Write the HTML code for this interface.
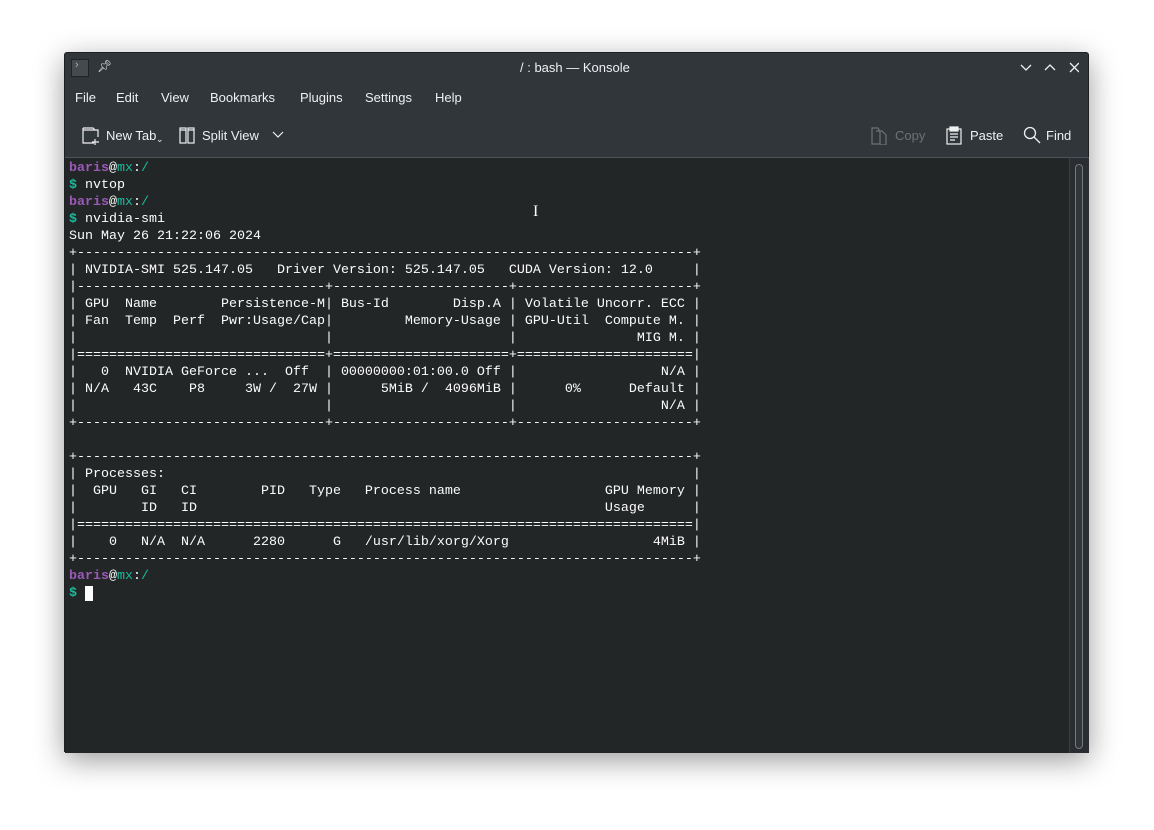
<!DOCTYPE html>
<html><head><meta charset="utf-8"><style>
body{margin:0;width:1154px;height:830px;background:#fff;position:relative;overflow:hidden;font-family:"Liberation Sans",sans-serif}
#win{position:absolute;left:64px;top:52px;width:1025px;height:700px;background:#31363b;box-shadow:0 8px 30px rgba(0,0,0,.4);border:1px solid #1e2124;box-sizing:border-box;border-radius:3px 3px 0 0}
.t{position:absolute;color:#eff0f1;font-size:13px;white-space:nowrap}
#term{position:absolute;left:0;top:104px;width:1004px;height:595px;background:#232627;border-top:1px solid #4d5358}
#sb{position:absolute;left:1004px;top:104px;width:19px;height:595px;background:#2a2e32;border-left:1px solid #3b4045;border-top:1px solid #4d5358}
#thumb{position:absolute;left:5px;top:6px;width:8px;height:585px;border:1px solid #76797c;border-radius:5px;background:#31363b;box-sizing:border-box}
pre{position:absolute;left:4px;top:2px;margin:0;font-family:"Liberation Mono",monospace;font-size:13.33px;line-height:17px;color:#fcfcfc}
.p{color:#9b59b6;font-weight:bold}.g{color:#1abc9c}.gb{color:#1abc9c;font-weight:bold}
</style></head><body>
<div id="win">
<div style="position:absolute;left:6px;top:6px;width:16px;height:16px;background:#454a4f;border:1px solid #222"></div>
<div class="t" style="left:10px;top:6px;font-size:11px;color:#aaa">›</div>
<div class="t" style="left:32px;top:6px;font-size:12px">📌︎</div>
<div class="t" style="left:455px;top:7px">/ : bash — Konsole</div>
<svg style="position:absolute;left:954px;top:8px" width="60" height="14" stroke="#eff0f1" fill="none" stroke-width="1.3"><path d="M2 4l5 5 5-5"/><path d="M26 9l5-5 5 5"/><path d="M51 2l9 9M60 2l-9 9"/></svg>
<div class="t" style="left:10px;top:37px">File</div>
<div class="t" style="left:51px;top:37px">Edit</div>
<div class="t" style="left:96px;top:37px">View</div>
<div class="t" style="left:145px;top:37px">Bookmarks</div>
<div class="t" style="left:235px;top:37px">Plugins</div>
<div class="t" style="left:300px;top:37px">Settings</div>
<div class="t" style="left:370px;top:37px">Help</div>
<svg style="position:absolute;left:17px;top:74px" width="20" height="18" stroke="#eff0f1" fill="none" stroke-width="1.2"><path d="M1 1h10l2 2h3v7M1 1v15h11M1 3h15M13 12v6M10 15h7"/></svg>
<div class="t" style="left:41px;top:75px">New Tab</div>
<div class="t" style="left:91px;top:81px;font-size:9px">⌄</div>
<svg style="position:absolute;left:114px;top:74px" width="18" height="18" stroke="#eff0f1" fill="none" stroke-width="1.2"><rect x="1" y="1" width="6" height="15"/><rect x="9" y="1" width="6" height="15"/><path d="M1 3h6M9 3h6"/></svg>
<div class="t" style="left:137px;top:75px">Split View</div>
<svg style="position:absolute;left:207px;top:78px" width="12" height="8" stroke="#eff0f1" fill="none" stroke-width="1.2"><path d="M1 1l5 5 5-5"/></svg>
<svg style="position:absolute;left:806px;top:74px" width="16" height="18" stroke="#6e7276" fill="none" stroke-width="1.2"><path d="M1 1h6l2 3v13H1zM5 4h6l4 4v10H9"/></svg>
<div class="t" style="left:830px;top:75px;color:#6e7276">Copy</div>
<svg style="position:absolute;left:881px;top:73px" width="16" height="19" stroke="#eff0f1" fill="none" stroke-width="1.2"><rect x="1" y="3" width="14" height="15"/><rect x="4" y="1" width="8" height="4" fill="#eff0f1"/><path d="M4 8h8M4 11h8M4 14h5"/></svg>
<div class="t" style="left:905px;top:75px">Paste</div>
<svg style="position:absolute;left:958px;top:73px" width="18" height="18" stroke="#eff0f1" fill="none" stroke-width="1.3"><circle cx="7" cy="7" r="5.5"/><path d="M11 11l6 6"/></svg>
<div class="t" style="left:981px;top:75px">Find</div>
<div id="term"><pre><span class="p">baris</span>@<span class="g">mx</span>:<span class="g">/</span>
<span class="gb">$</span> nvtop
<span class="p">baris</span>@<span class="g">mx</span>:<span class="g">/</span>
<span class="gb">$</span> nvidia-smi
Sun May 26 21:22:06 2024       
+-----------------------------------------------------------------------------+
| NVIDIA-SMI 525.147.05   Driver Version: 525.147.05   CUDA Version: 12.0     |
|-------------------------------+----------------------+----------------------+
| GPU  Name        Persistence-M| Bus-Id        Disp.A | Volatile Uncorr. ECC |
| Fan  Temp  Perf  Pwr:Usage/Cap|         Memory-Usage | GPU-Util  Compute M. |
|                               |                      |               MIG M. |
|===============================+======================+======================|
|   0  NVIDIA GeForce ...  Off  | 00000000:01:00.0 Off |                  N/A |
| N/A   43C    P8     3W /  27W |      5MiB /  4096MiB |      0%      Default |
|                               |                      |                  N/A |
+-------------------------------+----------------------+----------------------+
                                                                               
+-----------------------------------------------------------------------------+
| Processes:                                                                  |
|  GPU   GI   CI        PID   Type   Process name                  GPU Memory |
|        ID   ID                                                   Usage      |
|=============================================================================|
|    0   N/A  N/A      2280      G   /usr/lib/xorg/Xorg                  4MiB |
+-----------------------------------------------------------------------------+
<span class="p">baris</span>@<span class="g">mx</span>:<span class="g">/</span>
<span class="gb">$</span> <span style="background:#fcfcfc">&nbsp;</span></pre>
<div style="position:absolute;left:468px;top:45px;color:#fcfcfc;font-size:16px;font-family:'Liberation Serif',serif">I</div>
</div>
<div id="sb"><div id="thumb"></div></div>
</div>
</body></html>
